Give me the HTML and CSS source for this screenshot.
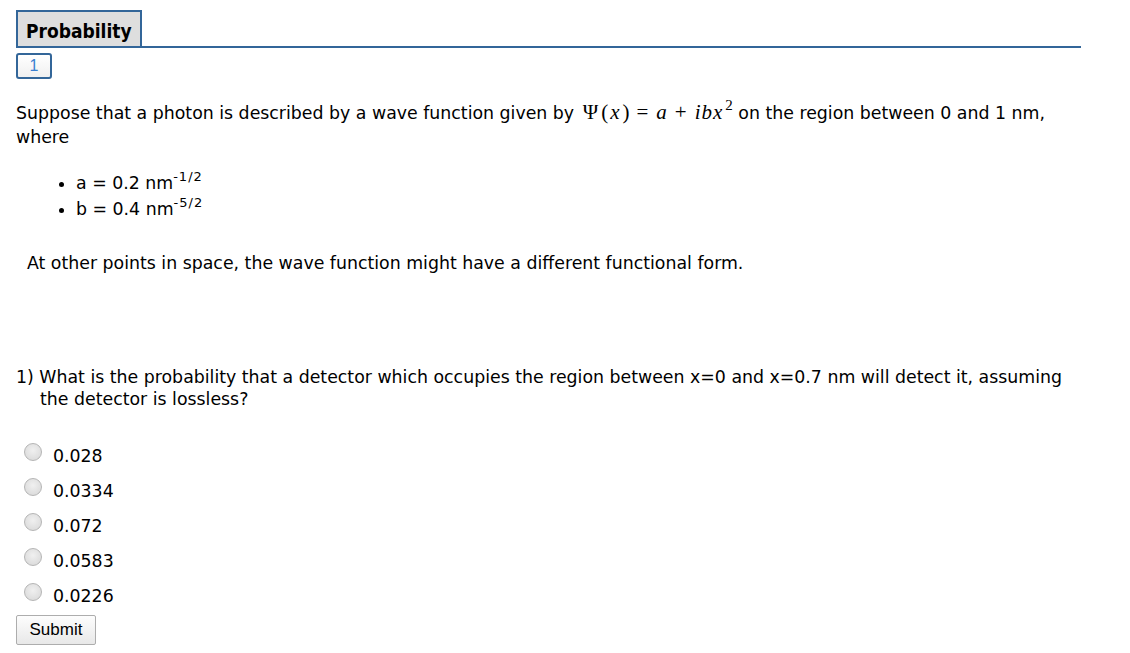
FILE: index.html
```html
<!DOCTYPE html>
<html>
<head>
<meta charset="utf-8">
<link rel="stylesheet" href="styles.css">
</head>
<body>
<div class="page">
  <div class="tabbar">
    <div class="tab">Probability</div>
  </div>
  <div class="pager"><span class="pagebtn">1</span></div>
  <p class="intro"><span>Suppose that a photon is described by a wave function given by</span> <span class="math"><span class="up psi">&Psi;</span><span class="up paren">(</span><i class="var">x</i><span class="up paren">)</span><span class="up op">=</span><i class="var">a</i><span class="up op">+</span><i class="var ibx">ibx</i><sup class="up">2</sup></span> <span>on the region between 0 and 1 nm,</span> <span>where</span></p>
  <ul class="vals">
    <li>a = 0.2 nm<sup>-1/2</sup></li>
    <li>b = 0.4 nm<sup>-5/2</sup></li>
  </ul>
  <p class="note">At other points in space, the wave function might have a different functional form.</p>
  <p class="question"><span class="qnum">1)</span> <span>What is the probability that a detector which occupies the region between x=0 and x=0.7 nm will detect it, assuming</span> <span>the detector is lossless?</span></p>
  <div class="choices">
    <label class="choice"><span class="radio"></span>0.028</label>
    <label class="choice"><span class="radio"></span>0.0334</label>
    <label class="choice"><span class="radio"></span>0.072</label>
    <label class="choice"><span class="radio"></span>0.0583</label>
    <label class="choice"><span class="radio"></span>0.0226</label>
  </div>
  <button class="submit">Submit</button>
</div>
</body>
</html>
```
FILE: styles.css
```css
html, body { margin: 0; padding: 0; background: #fff; }
body {
  font-family: "DejaVu Sans", sans-serif;
  font-size: 17.35px;
  color: #000;
}
.page { padding: 10px 49px 0 16px; }
.tabbar {
  display: flex;
  border-bottom: 2px solid #336699;
}
.tab {
  background: #dedede;
  border: 2px solid #336699;
  border-bottom: none;
  font-family: "DejaVu Sans Condensed", "DejaVu Sans", sans-serif;
  font-weight: bold;
  font-size: 19px;
  height: 34px;
  padding: 0 8px;
  line-height: 38px;
}
.pager { margin-top: 5px; }
.pagebtn {
  display: inline-block;
  width: 32px;
  height: 22px;
  border: 2px solid #336699;
  border-radius: 3px;
  color: #3a7fd0;
  font-family: "Liberation Sans", Arial, sans-serif;
  font-size: 16px;
  line-height: 22px;
  text-align: center;
  background: linear-gradient(#fff, #f0f0f0);
}
.intro { margin: 22px 0 0; line-height: 24px; }
.math {
  font-family: "Liberation Serif", "DejaVu Serif", serif;
  font-size: 21px;
  line-height: 1;
  padding-left: 3px;
}
.math .var { font-style: italic; padding: 0 2px 0 1px; }
.math .ibx { letter-spacing: 1px; }
.math .up { font-style: normal; }
.math .psi { padding-right: 2px; }
.math .paren { padding: 0 1px; }
.math .op { padding: 0 7px 0 6px; }
.math sup { font-size: 15px; vertical-align: 9px; line-height: 0; }
.vals { margin: 21px 0 0; padding-left: 60px; line-height: 26px; }
.vals sup { font-size: 13px; line-height: 0; vertical-align: 8px; letter-spacing: 1px; }
.note { margin: 31px 0 0 11px; }
.question {
  margin: 93px 0 0;
  padding-left: 24px;
  text-indent: -24px;
  line-height: 22px;
}
.choices { margin-top: 28px; display: flex; flex-direction: column; }
.choice {
  display: flex;
  align-items: center;
  height: 35px;
  padding-left: 8px;
}
.radio {
  width: 16px;
  height: 16px;
  border-radius: 50%;
  border: 1px solid #b5b5b5;
  background: radial-gradient(circle at 50% 40%, #f0f0f0, #d6d6d6);
  margin-right: 11px;
  margin-top: -8px;
}
.submit {
  margin-top: 2px;
  font-family: "Liberation Sans", Arial, sans-serif;
  font-size: 17px;
  padding: 3px 10px;
  height: 30px;
  width: 80px;
  background: linear-gradient(#fdfdfd, #e8e8e8);
  border: 1px solid #adadad;
  border-radius: 2px;
  color: #000;
}
```
